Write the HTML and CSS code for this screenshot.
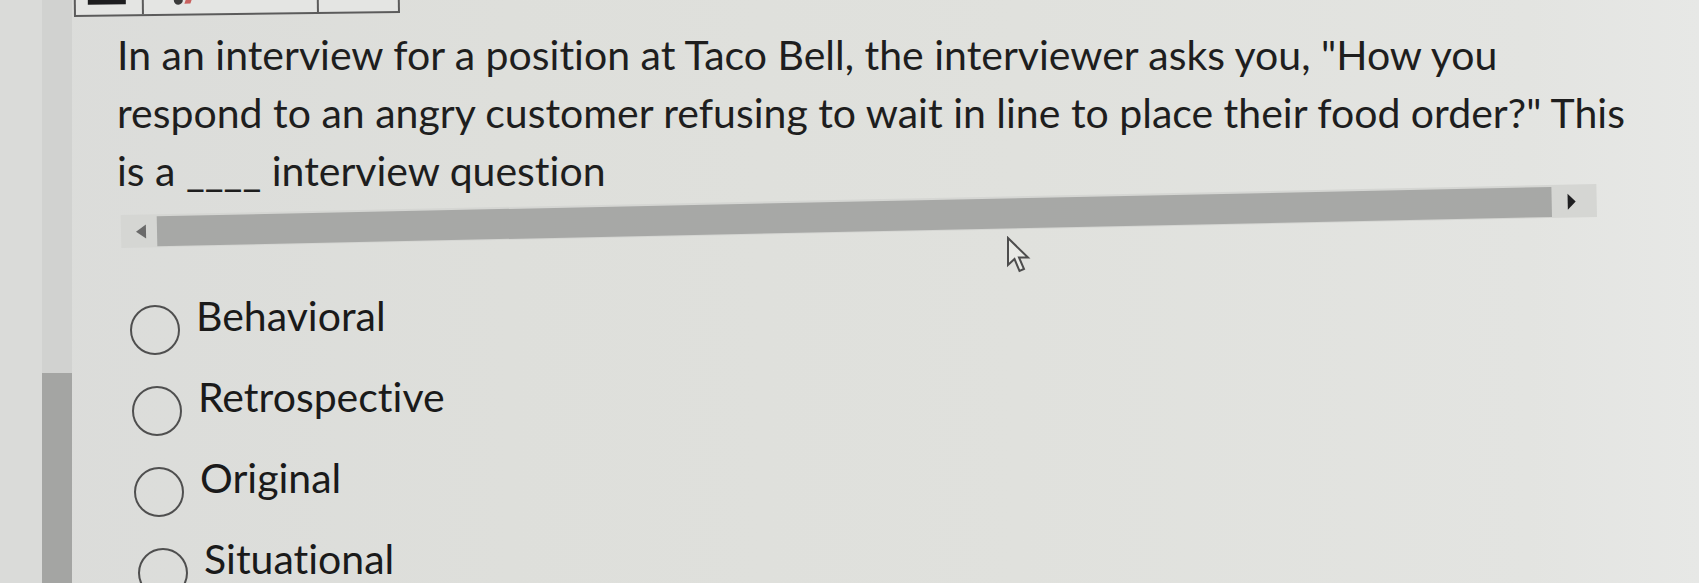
FILE: index.html
```html
<!DOCTYPE html>
<html lang="en">
<head>
<meta charset="utf-8">
<title>Quiz question</title>
<link rel="stylesheet" href="styles.css">
</head>
<body>
<div class="screen">
  <aside class="rail">
    <div class="rail-edge"></div>
    <div class="rail-col">
      <div class="rail-top"></div>
      <div class="rail-bar"></div>
    </div>
  </aside>
  <main class="content">
    <div class="tool-table">
      <div class="cell c1"><span class="mark-black"></span></div>
      <div class="cell c2"><span class="mark-dark"></span><span class="mark-red"></span></div>
      <div class="cell c3"></div>
    </div>
    <p class="question">In an interview for a position at Taco Bell, the interviewer asks you, "How you<br>respond to an angry customer refusing to wait in line to place their food order?" This<br>is a ____ interview question</p>
    <div class="hscroll">
      <div class="sbtn sbtn-left"><span class="tri-left"></span></div>
      <div class="thumb"></div>
      <div class="sbtn sbtn-right"><span class="tri-right"></span></div>
    </div>
    <ul class="options">
      <li class="option"><span class="radio"></span><span class="label">Behavioral</span></li>
      <li class="option"><span class="radio"></span><span class="label">Retrospective</span></li>
      <li class="option"><span class="radio"></span><span class="label">Original</span></li>
      <li class="option"><span class="radio"></span><span class="label">Situational</span></li>
    </ul>
  </main>
  <svg class="cursor" width="26" height="38" viewBox="0 0 26 38" aria-hidden="true">
    <path d="M2 2 L2 29 L8.5 23 L13.5 35 L18 33 L13 21.5 L22 21.5 Z" fill="#e9eae6" stroke="#4d4d4d" stroke-width="2" stroke-linejoin="miter"/>
  </svg>
</div>
</body>
</html>
```
FILE: styles.css
```css
html, body {
  margin: 0;
  padding: 0;
}
body {
  width: 1699px;
  height: 583px;
  overflow: hidden;
  font-family: Lato, "Open Sans", "Liberation Sans", sans-serif;
  font-variant-ligatures: none;
  color: #1c1c1c;
}
.screen {
  position: relative;
  display: flex;
  width: 1699px;
  height: 583px;
  overflow: hidden;
  background: linear-gradient(90deg, #dbdcda 0%, #dedfdb 30%, #e0e1dd 60%, #e3e4e1 90%, #e7e8e6 100%);
}
.rail {
  display: flex;
  flex: 0 0 72px;
  height: 583px;
}
.rail-edge {
  width: 42px;
  background: #dadbd9;
}
.rail-col {
  width: 30px;
  display: flex;
  flex-direction: column;
}
.rail-top {
  height: 373px;
  background: #d1d2d0;
}
.rail-bar {
  flex: 1;
  background: #a4a5a3;
}
.content {
  flex: 1;
  display: flex;
  flex-direction: column;
  align-items: flex-start;
  min-width: 0;
}
.content > * {
  flex-shrink: 0;
}
.tool-table {
  display: flex;
  margin-top: -23px;
  margin-left: 2px;
  height: 40px;
  border: 2px solid #5b5b5b;
  border-top: none;
  box-sizing: border-box;
  background: #e4e5e3;
  transform: rotate(-0.7deg);
  transform-origin: 0 100%;
}
.cell {
  position: relative;
  height: 100%;
  border-right: 2px solid #5b5b5b;
}
.cell:last-child { border-right: none; }
.c1 { width: 66px; }
.c2 { width: 173px; }
.c3 { width: 79px; }
.mark-black {
  position: absolute;
  left: 12px;
  top: 19px;
  width: 38px;
  height: 9px;
  background: #1d1d1f;
}
.mark-dark {
  position: absolute;
  left: 30px;
  top: 20px;
  width: 9px;
  height: 9px;
  border-radius: 0 0 5px 5px;
  background: #3a3a3a;
}
.mark-red {
  position: absolute;
  left: 42px;
  top: 20px;
  width: 6px;
  height: 8px;
  background: #c9615f;
  transform: skewX(-20deg);
}
.question {
  margin: 9px 0 0 45px;
  font-size: 41px;
  line-height: 58px;
  white-space: nowrap;
  color: #1e1e1e;
}
.hscroll {
  display: flex;
  align-items: stretch;
  margin: 15px 0 0 49px;
  width: 1476px;
  height: 33px;
  background: #d5d6d3;
  transform: rotate(-1.2deg);
  transform-origin: 0 50%;
}
.sbtn {
  display: flex;
  align-items: center;
  justify-content: center;
}
.sbtn-left { width: 36px; }
.sbtn-right { width: 45px; }
.thumb {
  flex: 1;
  margin: 2px 0 1px;
  background: #a7a8a6;
}
.tri-left {
  width: 0;
  height: 0;
  border-top: 7px solid transparent;
  border-bottom: 7px solid transparent;
  border-right: 10px solid #6a6a6a;
  margin-left: 4px;
}
.tri-right {
  width: 0;
  height: 0;
  border-top: 8px solid transparent;
  border-bottom: 8px solid transparent;
  border-left: 8px solid #1f1f21;
  margin-left: -6px;
}
.options {
  list-style: none;
  margin: 57px 0 0 58px;
  padding: 0;
  display: flex;
  flex-direction: column;
  gap: 31px;
}
.option {
  display: flex;
  align-items: flex-start;
  gap: 16px;
  height: 50px;
}
.option:nth-child(2) { margin-left: 2px; }
.option:nth-child(3) { margin-left: 4px; }
.option:nth-child(4) { margin-left: 8px; }
.radio {
  flex: 0 0 auto;
  width: 50px;
  height: 50px;
  box-sizing: border-box;
  border: 2px solid #4f4f4f;
  border-radius: 50%;
}
.label {
  margin-top: -12px;
  font-size: 41px;
  line-height: 46px;
  color: #1a1a1a;
  white-space: nowrap;
}
.cursor {
  position: absolute;
  left: 1006px;
  top: 236px;
}
```
